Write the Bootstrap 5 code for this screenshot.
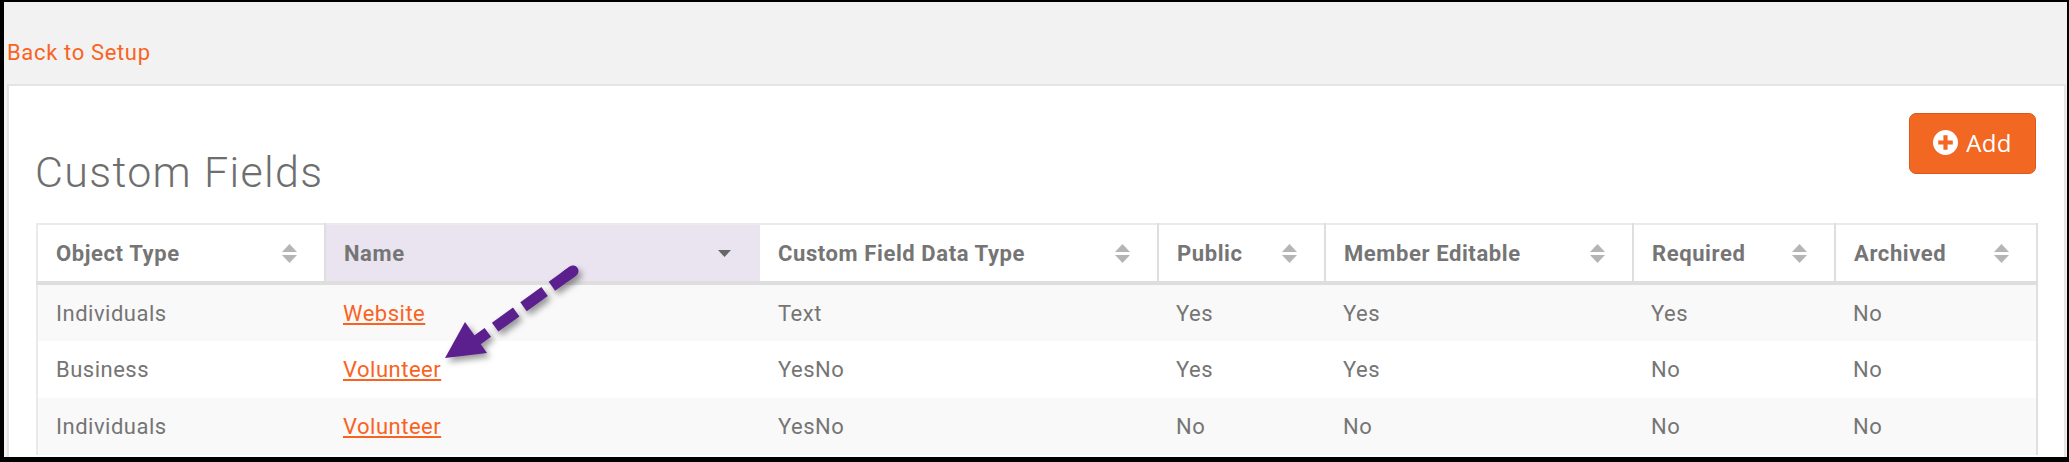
<!doctype html>
<html lang="en"><head><meta charset="utf-8"><title>Custom Fields</title>
<link rel="stylesheet" href="https://cdn.jsdelivr.net/npm/bootstrap@5.3.0/dist/css/bootstrap.min.css">
<style>
html,body{height:462px;overflow:hidden;margin:0}
body{background:#000;font-family:Roboto,"Liberation Sans",sans-serif;color:#757575}
.frame{margin:2px 2px 0 4px;height:455px;background:#f2f2f2;overflow:hidden;position:relative}
.backbar{height:82px;padding:39px 0 0 3px;font-size:22px;line-height:24px;letter-spacing:.65px}
.backbar a,.fieldtable a{color:#f9631f}
.backbar a{text-decoration:none}
.sheet{margin:0 1px 0 3px;background:#fff;border:2px solid #e4e4e4;border-bottom:0;border-right-width:2px;height:373px;padding:0 28px 0 27px}
.headrow{height:137px;position:relative}
.pagetitle{font-size:43px;font-weight:300;line-height:50px;margin:0 0 0 -1px;padding-top:61px;color:#6e6e6e;letter-spacing:1.35px}
.addbtn{--bs-btn-bg:#f26722;--bs-btn-border-color:#d9581c;--bs-btn-color:#fff;--bs-btn-hover-bg:#f26722;--bs-btn-hover-color:#fff;--bs-btn-border-radius:7px;width:127px;height:61px;margin-top:27px;font-size:24px;padding:0 0 2px;letter-spacing:.4px;font-family:"Open Sans",Roboto,sans-serif;gap:8px}
.addbtn svg{width:25px;height:25px;flex:none}
.fieldtable{table-layout:fixed;width:2000px;margin:0;color:#757575;font-size:22px;letter-spacing:.5px;border-top:2px solid #eaeaea;border-left:2px solid #eaeaea;border-right:2px solid #e0e0e0;--bs-table-bg:transparent}
.fieldtable th{height:59px;font-weight:700;font-size:22px;letter-spacing:.6px;padding:0 20px 0 18px;vertical-align:middle;border-bottom:4px solid #dedede;border-right:2px solid #dedede;background:#fff;color:#757575;white-space:nowrap}
.fieldtable th:last-child{border-right:0}
.fieldtable th.sorted{background:#e9e4ef;border-right:0}
.fieldtable td{height:57px;padding:0 18px;vertical-align:middle;border:0;background:#fff;color:#757575}
.fieldtable tbody tr:first-child td{height:58px}
.fieldtable tbody tr:nth-child(odd) td{background:#f9f9f9}
.thwrap{display:flex;justify-content:space-between;align-items:center}
.sorter{width:15px;height:19px;flex:none;margin-right:7px}
.sorted .sorter{margin-right:8px}
.pointer{position:absolute;left:438px;top:258px;width:145px;height:110px;filter:drop-shadow(3px 4px 3px rgba(0,0,0,.4))}
</style></head>
<body>
<div class="frame">
  <div class="backbar"><a href="#">Back to Setup</a></div>
  <div class="sheet">
    <div class="headrow d-flex justify-content-between align-items-start">
      <h1 class="pagetitle">Custom Fields</h1>
      <button type="button" class="btn addbtn d-inline-flex align-items-center justify-content-center">
        <svg viewBox="0 0 24 24"><circle cx="12" cy="12" r="12" fill="#fff"/><path d="M10 5h4v5h5v4h-5v5h-4v-5H5v-4h5z" fill="#f26722"/></svg>Add</button>
    </div>
    <table class="table fieldtable">
      <colgroup><col style="width:288px"><col style="width:435px"><col style="width:398px"><col style="width:167px"><col style="width:308px"><col style="width:202px"><col style="width:202px"></colgroup>
      <thead><tr>
        <th><div class="thwrap">Object Type<svg class="sorter" viewBox="0 0 15 19"><path d="M7.500 0 15 8H0zM0 11h15l-7.500 8z" fill="#b5b5b5"/></svg></div></th>
        <th class="sorted"><div class="thwrap">Name<svg class="sorter" viewBox="0 0 15 19"><path d="M1 6h13l-6.500 7z" fill="#666"/></svg></div></th>
        <th><div class="thwrap">Custom Field Data Type<svg class="sorter" viewBox="0 0 15 19"><path d="M7.500 0 15 8H0zM0 11h15l-7.500 8z" fill="#b5b5b5"/></svg></div></th>
        <th><div class="thwrap">Public<svg class="sorter" viewBox="0 0 15 19"><path d="M7.500 0 15 8H0zM0 11h15l-7.500 8z" fill="#b5b5b5"/></svg></div></th>
        <th><div class="thwrap">Member Editable<svg class="sorter" viewBox="0 0 15 19"><path d="M7.500 0 15 8H0zM0 11h15l-7.500 8z" fill="#b5b5b5"/></svg></div></th>
        <th><div class="thwrap">Required<svg class="sorter" viewBox="0 0 15 19"><path d="M7.500 0 15 8H0zM0 11h15l-7.500 8z" fill="#b5b5b5"/></svg></div></th>
        <th><div class="thwrap">Archived<svg class="sorter" viewBox="0 0 15 19"><path d="M7.500 0 15 8H0zM0 11h15l-7.500 8z" fill="#b5b5b5"/></svg></div></th>
      </tr></thead>
      <tbody>
        <tr><td>Individuals</td><td><a href="#">Website</a></td><td>Text</td><td>Yes</td><td>Yes</td><td>Yes</td><td>No</td></tr>
        <tr><td>Business</td><td><a href="#">Volunteer</a></td><td>YesNo</td><td>Yes</td><td>Yes</td><td>No</td><td>No</td></tr>
        <tr><td>Individuals</td><td><a href="#">Volunteer</a></td><td>YesNo</td><td>No</td><td>No</td><td>No</td><td>No</td></tr>
      </tbody>
    </table>
  </div>
  <svg class="pointer" viewBox="0 0 145 110">
    <path d="M131 11 20 91" stroke="#5b1f8e" stroke-width="11" fill="none" stroke-dasharray="26 9"/>
    <path d="M131 11 124 16" stroke="#5b1f8e" stroke-width="11" fill="none" stroke-linecap="round"/>
    <path d="M3 98 23 62 45 93z" fill="#5b1f8e"/>
  </svg>
</div>
</body></html>
